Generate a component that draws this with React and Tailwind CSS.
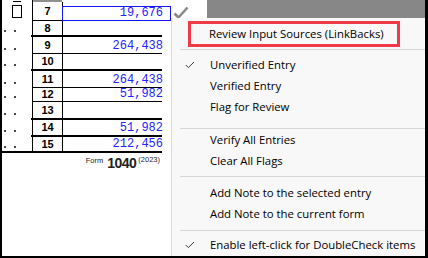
import { Fragment } from "react"

const rows = [
    { n: "7", v: "19,676", h: "h-[18px]", line: "thin", check: true },
    { n: "8", v: "", h: "h-[14px]", line: "thick" },
    { n: "9", v: "264,438", h: "h-[16px]", line: "thin" },
    { n: "10", v: "", h: "h-[15px]", line: "thick" },
    { n: "11", v: "264,438", h: "h-[16px]", line: "thin" },
    { n: "12", v: "51,982", h: "h-[13px]", line: "thin" },
    { n: "13", v: "", h: "h-[16px]", line: "thick" },
    { n: "14", v: "51,982", h: "h-[15px]", line: "thick" },
    { n: "15", v: "212,456", h: "h-[14px]", line: "full" },
]

function Tick({ className }) {
    return (
        <svg width="10" height="8" viewBox="0 0 10 8" className={className}>
            <path d="M0.8 4 L3.3 6.6 L9 1" fill="none" stroke="#3a3a3a" strokeWidth="1" />
        </svg>
    )
}

function MenuItem({ label, checked }) {
    return (
        <div className="h-[21px] flex items-center whitespace-nowrap">
            <div className="w-[38px] pl-[13px] flex items-center">
                {checked && <Tick />}
            </div>
            <span>{label}</span>
        </div>
    )
}

function Separator({ className }) {
    return <div className={"h-px ml-[8px] bg-[#d6d6d6] " + className} />
}

function FormRow({ row }) {
    return (
        <Fragment>
            <div className={"relative flex " + row.h}>
                {/* dot leaders / checkbox */}
                <div className="w-[30px] flex items-end pb-[3px]">
                    {row.check ? (
                        <div className="ml-[10px] mb-[-1px] w-[10px] h-[13px] border border-black" />
                    ) : (
                        <div className="flex gap-[8px] ml-[2px]">
                            <div className="w-[2px] h-[2px] bg-[#4a4a4a]" />
                            <div className="w-[2px] h-[2px] bg-[#4a4a4a]" />
                        </div>
                    )}
                </div>
                <div className="w-[30px] border-l border-black flex items-center justify-center font-bold text-[11px] leading-none text-black">
                    {row.n}
                </div>
                <div className="w-[101px] border-l border-black flex items-end justify-end font-['Liberation_Mono',monospace] text-[12px] leading-none text-[#2424ff] pb-px">
                    {row.v}
                </div>
                {row.check && (
                    <div className="absolute left-[60px] top-[4px] w-[109px] h-[15px] border border-[#1414ff]" />
                )}
            </div>
            {row.line === "thin" && <div className="h-px ml-[30px] w-[130px] bg-black" />}
            {row.line === "thick" && <div className="h-[2px] ml-[29px] w-[131px] bg-black" />}
            {row.line === "full" && <div className="h-[2px] w-[160px] bg-black" />}
        </Fragment>
    )
}

export default function App() {
    return (
        <div className="w-[428px] h-[258px] flex border-l-2 border-r-[3px] border-b-2 border-black bg-white font-['Liberation_Sans',Arial,sans-serif] overflow-hidden">
            {/* Form page */}
            <div className="w-[169px] flex flex-col">
                <div className="h-[2px] flex">
                    <div className="w-[30px] flex items-end">
                        <div className="ml-[11px] w-[8px] h-px bg-black" />
                    </div>
                    <div className="w-[30px] border-l border-black bg-[#8f8f8f]" />
                </div>
                {rows.map((row) => (
                    <FormRow key={row.n} row={row} />
                ))}
                <div className="w-[160px] flex justify-end items-start pt-px pr-[2px] text-[#222]">
                    <span className="text-[7.5px] mt-[1px] mr-[4px]">Form</span>
                    <span className="text-[14px] font-bold leading-none tracking-[-0.5px] mt-[2px]">1040</span>
                    <span className="text-[7.5px] ml-[2px]">(2023)</span>
                </div>
            </div>

            {/* Right side: top strip + context menu */}
            <div className="flex-1 flex flex-col">
                <div className="h-[18px] flex">
                    <div className="w-[36px] bg-white flex items-start pt-[6px] pl-[2px]">
                        <svg width="16" height="13" viewBox="0 0 16 13">
                            <path d="M1.5 7.5 L5.5 11.5 L14.5 1.5" fill="none" stroke="#8a8a8a" strokeWidth="2.6" strokeLinejoin="round" />
                        </svg>
                    </div>
                    <div className="flex-1 bg-[#878787]" />
                </div>
                <div className="flex-1 flex flex-col border-l border-[#d9d9d9] bg-[#f8f8f8] font-['Open_Sans','Noto_Sans',sans-serif] text-[11.35px] text-black">
                    <div className="mt-[3px] ml-[16px] w-[212px] h-[26px] border-[3px] border-[#ee3b47] flex items-center pl-[18px] whitespace-nowrap">
                        Review Input Sources (LinkBacks)
                    </div>
                    <Separator className="mt-[2px]" />
                    <div className="mt-[4px]">
                        <MenuItem label="Unverified Entry" checked />
                        <MenuItem label="Verified Entry" />
                        <MenuItem label="Flag for Review" />
                    </div>
                    <Separator className="mt-[11px]" />
                    <div>
                        <MenuItem label="Verify All Entries" />
                        <MenuItem label="Clear All Flags" />
                    </div>
                    <Separator className="mt-[5px]" />
                    <div className="mt-[5px]">
                        <MenuItem label="Add Note to the selected entry" />
                        <MenuItem label="Add Note to the current form" />
                    </div>
                    <Separator className="mt-[6px]" />
                    <div className="mt-[3px]">
                        <MenuItem label="Enable left-click for DoubleCheck items" checked />
                    </div>
                </div>
            </div>
        </div>
    )
}
